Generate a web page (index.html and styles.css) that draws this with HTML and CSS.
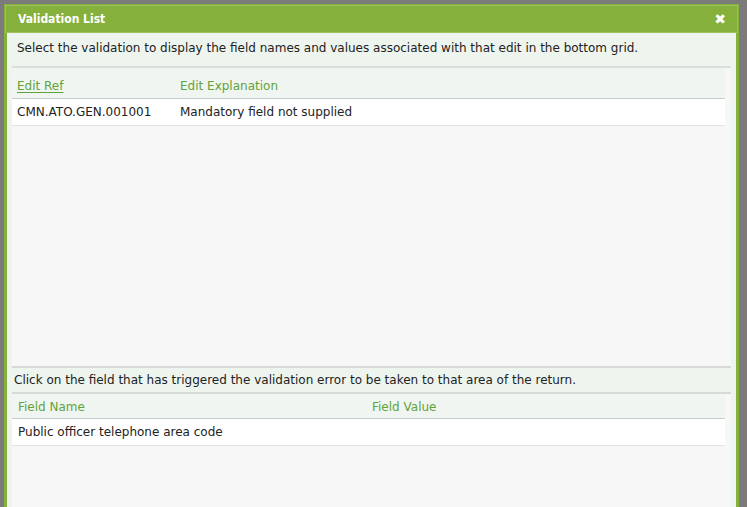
FILE: index.html
```html
<!DOCTYPE html>
<html>
<head>
<meta charset="utf-8">
<link rel="stylesheet" href="styles.css">
</head>
<body>
<div class="dialog">
  <div class="titlebar">
    <span class="title">Validation List</span>
    <span class="close">✖</span>
  </div>
  <div class="body">
    <div class="desc">Select the validation to display the field names and values associated with that edit in the bottom grid.</div>
    <div class="grid grid-top">
      <div class="row head">
        <div class="cell c1"><span class="sort">Edit Ref</span></div>
        <div class="cell">Edit Explanation</div>
      </div>
      <div class="row data">
        <div class="cell c1">CMN.ATO.GEN.001001</div>
        <div class="cell">Mandatory field not supplied</div>
      </div>
    </div>
    <div class="desc2">Click on the field that has triggered the validation error to be taken to that area of the return.</div>
    <div class="grid grid-bottom">
      <div class="row head">
        <div class="cell c2">Field Name</div>
        <div class="cell">Field Value</div>
      </div>
      <div class="row data">
        <div class="cell c2">Public officer telephone area code</div>
        <div class="cell"></div>
      </div>
    </div>
  </div>
</div>
</body>
</html>
```
FILE: styles.css
```css
html, body {
  margin: 0;
  padding: 0;
  height: 100%;
  overflow: hidden;
  background: #7b7b7b;
}
body {
  font-family: "DejaVu Sans", sans-serif;
  font-size: 12px;
  color: #222;
}
.dialog {
  margin: 4px 0 0 4px;
  width: 729px;
  height: 520px;
  border-left: 3px solid #86b03c;
  border-right: 3px solid #86b03c;
  border-top: 1px solid #86b03c;
  background: #eef5ef;
  display: flex;
  flex-direction: column;
}
.titlebar {
  height: 26px;
  background: #86b03c;
  border: 1px solid #9cc15e;
  margin: 0 -2px;
  display: flex;
  align-items: center;
  justify-content: space-between;
  padding: 0 11px 0 12px;
  color: #fff;
}
.title {
  font-family: "DejaVu Sans Condensed", "DejaVu Sans", sans-serif;
  font-weight: bold;
  font-size: 12px;
}
.close {
  font-size: 14px;
  font-weight: bold;
  line-height: 1;
}
.body {
  padding: 0 5px;
  display: flex;
  flex-direction: column;
  flex: 1;
}
.desc {
  height: 33px;
  line-height: 30px;
  padding-left: 5px;
  border-bottom: 2px solid #dadfda;
}
.grid {
  background: #f7f7f7;
}
.grid-top {
  height: 298px;
}
.row {
  display: flex;
  width: 713px;
}
.head {
  background: #f1f5f1;
  color: #5fa43a;
  border-bottom: 1px solid #c9cdc9;
}
.grid-top .head {
  height: 30px;
}
.grid-top .head .cell {
  padding-top: 11px;
}
.sort {
  text-decoration: underline;
  text-underline-offset: 2px;
}
.data {
  background: #fff;
  height: 26px;
  align-items: center;
  border-bottom: 1px solid #e3e3e3;
}
.cell {
  padding-left: 5px;
}
.c1 {
  width: 158px;
}
.desc2 {
  border-top: 2px solid #d6dad6;
  border-bottom: 2px solid #d6dad6;
  height: 24px;
  line-height: 25px;
  padding-left: 2px;
}
.grid-bottom {
  flex: 1;
}
.grid-bottom .head {
  height: 24px;
  align-items: center;
}
.grid-bottom .head .cell {
  padding-top: 2px;
}
.grid-bottom .cell {
  padding-left: 6px;
}
.c2 {
  width: 348px;
}
.grid-bottom .data {
  height: 26px;
}
```
